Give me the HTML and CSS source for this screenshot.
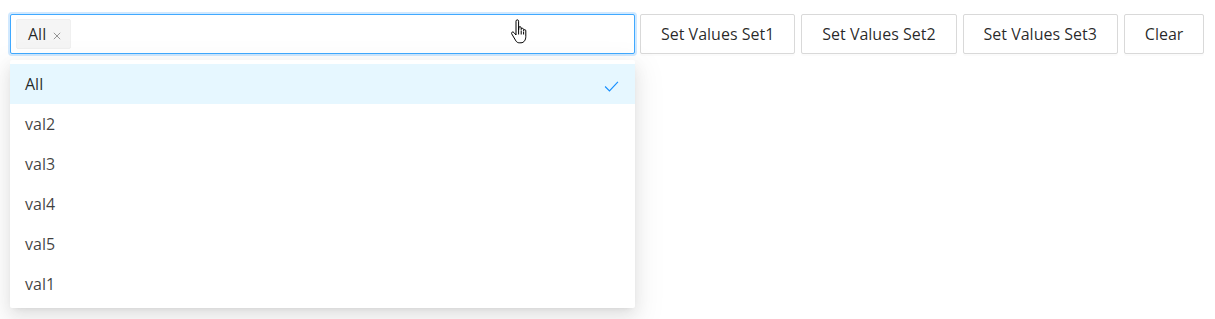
FILE: index.html
```html
<!DOCTYPE html>
<html lang="en">
<head>
<meta charset="utf-8">
<title>Select</title>
<link rel="stylesheet" href="styles.css">
</head>
<body>
<div class="page">
  <div class="toolbar">
    <div class="select-wrap">
      <div class="select">
        <span class="tag"><span class="tag-text">All</span><svg class="tag-close" viewBox="0 0 10 10" width="8" height="8"><path d="M1 1L9 9M9 1L1 9" stroke="currentColor" stroke-width="1.1" fill="none"/></svg></span>
        <svg class="cursor" viewBox="0 0 18 26" width="18" height="26"><path d="M6 2.2c0-.9.6-1.4 1.3-1.4s1.3.5 1.3 1.4V11l.2-2.2c0-.8.6-1.2 1.2-1.2s1.2.5 1.2 1.3v1.6c0-.8.6-1.2 1.2-1.2s1.2.5 1.2 1.2v1.2c0-.7.5-1.1 1.1-1.1s1.1.4 1.1 1.2v5.8c0 3.2-1.8 6.2-4.8 6.2H9.2c-1.4 0-2.5-.7-3.3-1.9L1.8 15c-.5-.8-.2-1.6.4-1.9.6-.3 1.3-.1 1.8.5L6 16z" fill="#fff" stroke="#000" stroke-width="1" stroke-linejoin="round"/><path d="M8.6 11v4.5M11.2 11.5v4M13.6 12.5v3" stroke="#000" stroke-width="1" fill="none"/></svg>
      </div>
      <div class="dropdown">
        <div class="option selected"><span>All</span><svg class="check" viewBox="0 0 16 12" width="15" height="11"><path d="M1 6l4.8 4.8L15 1" stroke="#1890ff" stroke-width="1.3" fill="none"/></svg></div>
        <div class="option">val2</div>
        <div class="option">val3</div>
        <div class="option">val4</div>
        <div class="option">val5</div>
        <div class="option">val1</div>
      </div>
    </div>
    <button class="btn">Set Values Set1</button>
    <button class="btn">Set Values Set2</button>
    <button class="btn">Set Values Set3</button>
    <button class="btn btn-clear">Clear</button>
  </div>
</div>
</body>
</html>
```
FILE: styles.css
```css
* { box-sizing: border-box; }
html, body { margin: 0; background: #fff; min-height: 319px; }
body {
  font-family: "Open Sans", "Noto Sans", sans-serif;
  font-size: 16px;
  color: rgba(0,0,0,0.85);
}
.page { padding: 14px 10px; }
.toolbar {
  display: flex;
  align-items: flex-start;
  gap: 6px;
}
.select-wrap {
  display: flex;
  flex-direction: column;
  width: 625px;
  margin-right: -1px;
}
.select {
  position: relative;
  height: 40px;
  border: 1px solid #40a9ff;
  border-radius: 2px;
  box-shadow: 0 0 0 2px rgba(24,144,255,0.2);
  padding: 4px 5px;
  display: flex;
  align-items: center;
  background: #fff;
}
.tag {
  display: inline-flex;
  align-items: center;
  height: 30px;
  padding: 0 9px 0 11px;
  background: #f5f5f5;
  border: 1px solid #f0f0f0;
  border-radius: 2px;
  gap: 7px;
}
.tag-text { line-height: 28px; }
.tag-close { color: rgba(0,0,0,0.45); margin-top: 3px; }
.cursor {
  position: absolute;
  left: 499px;
  top: 4px;
}
.dropdown {
  position: relative;
  z-index: 10;
  margin-top: 6px;
  background: #fff;
  border-radius: 2px;
  padding: 4px 0;
  box-shadow: 0 3px 6px -4px rgba(0,0,0,0.12), 0 6px 16px 0 rgba(0,0,0,0.08), 0 9px 28px 8px rgba(0,0,0,0.05);
}
.option {
  height: 40px;
  display: flex;
  align-items: center;
  justify-content: space-between;
  padding: 0 16px 0 15px;
  color: rgba(0,0,0,0.75);
}
.option.selected {
  background: #e6f7ff;
  color: rgba(0,0,0,0.85);
  font-weight: 500;
}
.check { margin-top: 4px; }
.btn {
  height: 40px;
  padding: 0 20px;
  font-family: inherit;
  font-size: 16px;
  color: rgba(0,0,0,0.85);
  background: #fff;
  border: 1px solid #d9d9d9;
  border-radius: 2px;
  box-shadow: 0 2px 0 rgba(0,0,0,0.015);
  white-space: nowrap;
}
```
